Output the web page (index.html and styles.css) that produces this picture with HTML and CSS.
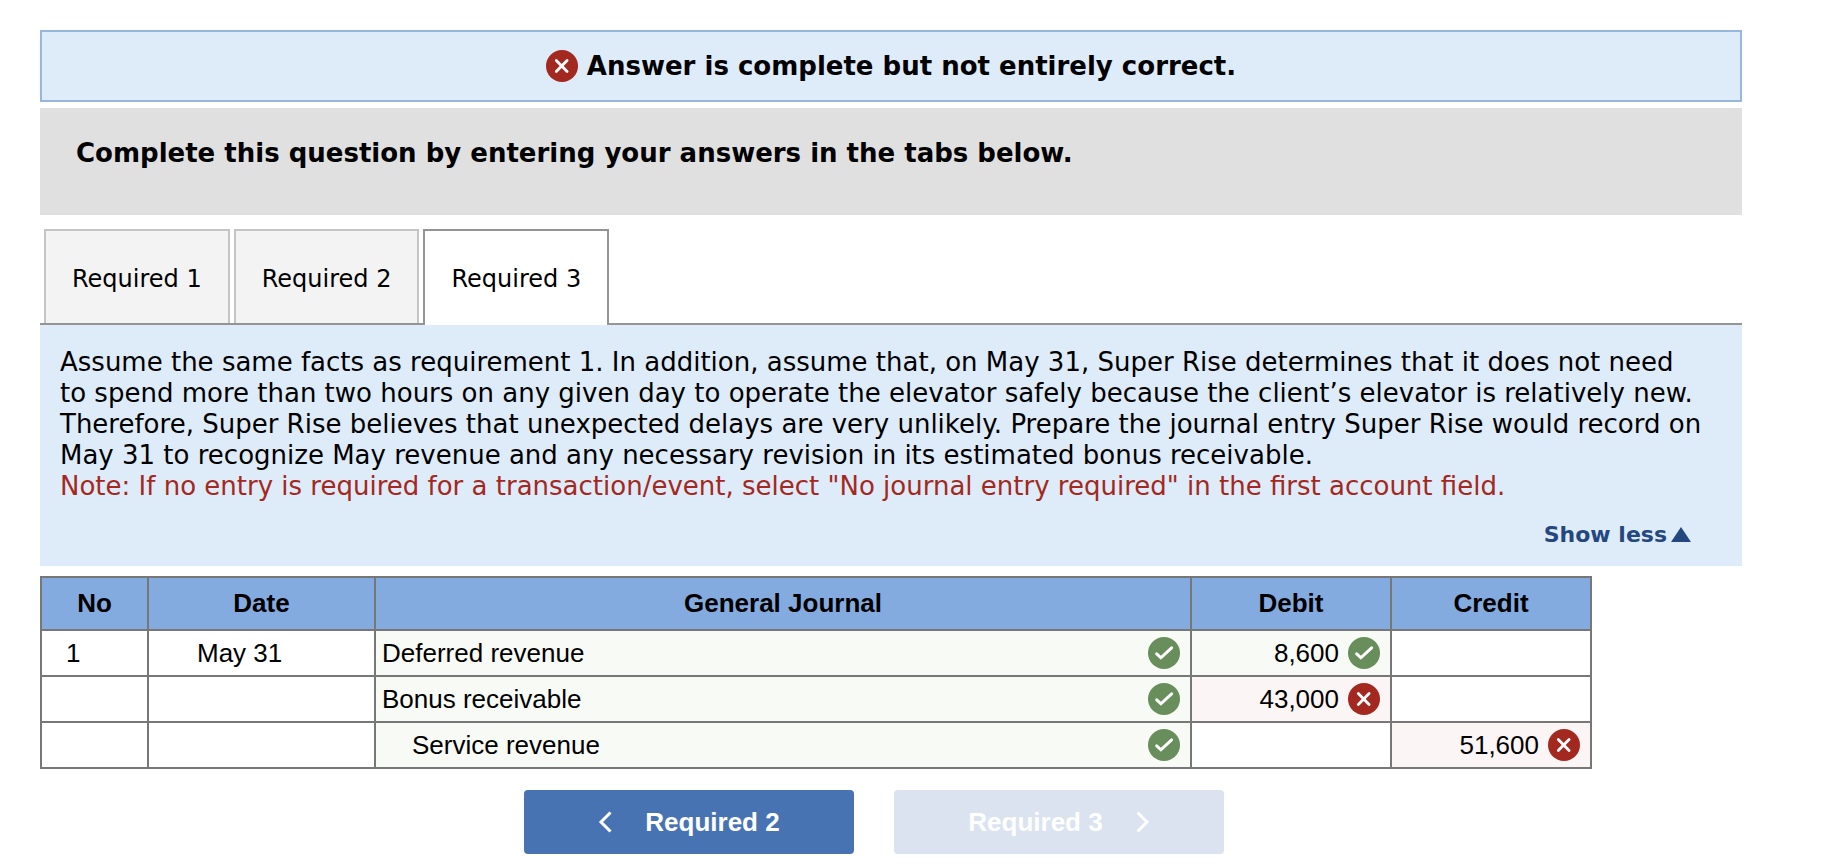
FILE: index.html
```html
<!DOCTYPE html>
<html lang="en">
  <head>
    <meta charset="UTF-8" />
    <title>Journal entry</title>
    <link rel="stylesheet" href="styles.css">
  </head>
  <body>
    <svg class="sprite" aria-hidden="true">
      <symbol id="check" viewBox="0 0 32 32">
        <circle cx="16" cy="16" r="16" fill="#688e5b" />
        <path d="M8.7 16.8l4.2 4L23.6 10.8" fill="none" stroke="#fff" stroke-width="3" stroke-linecap="round" />
      </symbol>
      <symbol id="cross" viewBox="0 0 32 32">
        <circle cx="16" cy="16" r="16" fill="#a32820" />
        <path d="M10.3 10.6l10.8 10.8M21.1 10.6L10.3 21.4" fill="none" stroke="#fff" stroke-width="2.8" stroke-linecap="round" />
      </symbol>
    </svg>
    <main class="page">
      <div class="banner">
        <svg class="mark" role="img" aria-label="Incorrect"><use href="#cross" /></svg>
        <span>Answer is complete but not entirely correct.</span>
      </div>
      <div class="intro">Complete this question by entering your answers in the tabs below.</div>
      <div class="tabs" role="tablist">
        <button class="tab" role="tab">Required 1</button>
        <button class="tab" role="tab">Required 2</button>
        <button class="tab active" role="tab" aria-selected="true">Required 3</button>
      </div>
      <section class="question">
        <p>Assume the same facts as requirement 1. In addition, assume that, on May 31, Super Rise determines that it does not need to spend more than two hours on any given day to operate the elevator safely because the client’s elevator is relatively new. Therefore, Super Rise believes that unexpected delays are very unlikely. Prepare the journal entry Super Rise would record on May 31 to recognize May revenue and any necessary revision in its estimated bonus receivable.</p>
        <p class="note">Note: If no entry is required for a transaction/event, select "No journal entry required" in the first account field.</p>
        <a class="show-less" href="#">Show less<svg class="arrow" viewBox="0 0 20 15"><path d="M10 0l10 15H0z" fill="currentColor" /></svg></a>
      </section>
      <table class="journal">
        <colgroup>
          <col class="col-no">
          <col class="col-date">
          <col class="col-account">
          <col class="col-amount">
          <col class="col-amount">
        </colgroup>
        <thead>
          <tr>
            <th>No</th>
            <th>Date</th>
            <th>General Journal</th>
            <th>Debit</th>
            <th>Credit</th>
          </tr>
        </thead>
        <tbody>
          <tr>
            <td class="no">1</td>
            <td class="date">May 31</td>
            <td class="right"><div class="cell account"><span>Deferred revenue</span><svg class="mark" role="img" aria-label="Correct"><use href="#check" /></svg></div></td>
            <td class="right"><div class="cell amount"><span>8,600</span><svg class="mark" role="img" aria-label="Correct"><use href="#check" /></svg></div></td>
            <td></td>
          </tr>
          <tr>
            <td></td>
            <td></td>
            <td class="right"><div class="cell account"><span>Bonus receivable</span><svg class="mark" role="img" aria-label="Correct"><use href="#check" /></svg></div></td>
            <td class="wrong"><div class="cell amount"><span>43,000</span><svg class="mark" role="img" aria-label="Incorrect"><use href="#cross" /></svg></div></td>
            <td></td>
          </tr>
          <tr>
            <td></td>
            <td></td>
            <td class="right"><div class="cell account indent"><span>Service revenue</span><svg class="mark" role="img" aria-label="Correct"><use href="#check" /></svg></div></td>
            <td></td>
            <td class="wrong"><div class="cell amount"><span>51,600</span><svg class="mark" role="img" aria-label="Incorrect"><use href="#cross" /></svg></div></td>
          </tr>
        </tbody>
      </table>
      <nav class="pager">
        <button class="step">
          <svg class="chevron" viewBox="0 0 14 22"><path d="M12.5 1.5L3 11l9.5 9.5" /></svg>
          Required 2
        </button>
        <button class="step" disabled>
          Required 3
          <svg class="chevron" viewBox="0 0 14 22"><path d="M1.5 1.5L11 11l-9.500 9.500" /></svg>
        </button>
      </nav>
    </main>
  </body>
</html>
```
FILE: styles.css
```css
body {
  margin: 0;
  background: #fff;
  color: #000;
  font-family: Verdana, "DejaVu Sans", sans-serif;
  font-size: 26px;
}
button {
  font-family: inherit;
  color: inherit;
  cursor: pointer;
}
.sprite {
  display: none;
}
.page {
  padding: 30px 86px 12px 40px;
}
.mark {
  width: 32px;
  height: 32px;
  flex: none;
}
.banner {
  display: flex;
  align-items: center;
  justify-content: center;
  gap: 9px;
  box-sizing: border-box;
  min-height: 72px;
  background: #deebf9;
  border: 2px solid #98b7de;
  font-weight: bold;
}
.intro {
  margin-top: 6px;
  padding: 30px 36px 46px;
  background: #e0e0e0;
  font-weight: bold;
  line-height: 31px;
}
.tabs {
  display: flex;
  gap: 4px;
  margin-top: 14px;
  padding-left: 4px;
  border-bottom: 2px solid #949494;
}
.tab {
  padding: 33px 26px 29px;
  background: #f3f3f3;
  border: 2px solid #c4c4c4;
  border-bottom: 0;
  font-size: 24px;
  line-height: 30px;
}
.tab.active {
  margin-bottom: -2px;
  padding-bottom: 31px;
  background: #fff;
  border-color: #949494;
}
.question {
  display: flex;
  flex-direction: column;
  padding: 22px 38px 16px 20px;
  background: #deebf9;
  line-height: 31px;
}
.question p {
  margin: 0;
}
.question .note {
  color: #a32820;
}
.show-less {
  display: flex;
  align-items: center;
  align-self: flex-end;
  gap: 4px;
  margin: 17px 13px 0 0;
  color: #24477f;
  font-size: 22px;
  font-weight: bold;
  text-decoration: none;
}
.arrow {
  width: 20px;
  height: 15px;
}
.journal {
  width: 100%;
  max-width: 1552px;
  margin-top: 10px;
  border-collapse: collapse;
  table-layout: fixed;
  font-family: Arial, "Liberation Sans", sans-serif;
}
.col-no {
  width: 107px;
}
.col-date {
  width: 227px;
}
.col-amount {
  width: 200px;
}
.journal th,
.journal td {
  padding: 0;
  border: 2px solid #777;
}
.journal th {
  height: 51px;
  background: #84abe0;
}
.journal td {
  height: 44px;
}
.journal .no {
  padding-left: 24px;
}
.journal .date {
  padding-left: 48px;
}
.right {
  background: #f8faf6;
}
.wrong {
  background: #fcf5f5;
}
.cell {
  display: flex;
  align-items: center;
  gap: 9px;
  padding: 0 10px 0 6px;
}
.account {
  justify-content: space-between;
}
.amount {
  justify-content: flex-end;
}
.indent {
  padding-left: 36px;
}
.pager {
  display: flex;
  justify-content: center;
  gap: 40px;
  margin-top: 21px;
  padding-right: 34px;
}
.step {
  display: flex;
  align-items: center;
  justify-content: center;
  gap: 33px;
  width: 330px;
  height: 64px;
  padding: 0;
  background: #4873b3;
  border: 0;
  border-radius: 4px;
  color: #fff;
  font-family: Arial, "Liberation Sans", sans-serif;
  font-size: 26px;
  font-weight: bold;
}
.step:disabled {
  background: #dae3ef;
  cursor: default;
}
.chevron {
  width: 14px;
  height: 22px;
  fill: none;
  stroke: currentColor;
  stroke-width: 3;
}
```
